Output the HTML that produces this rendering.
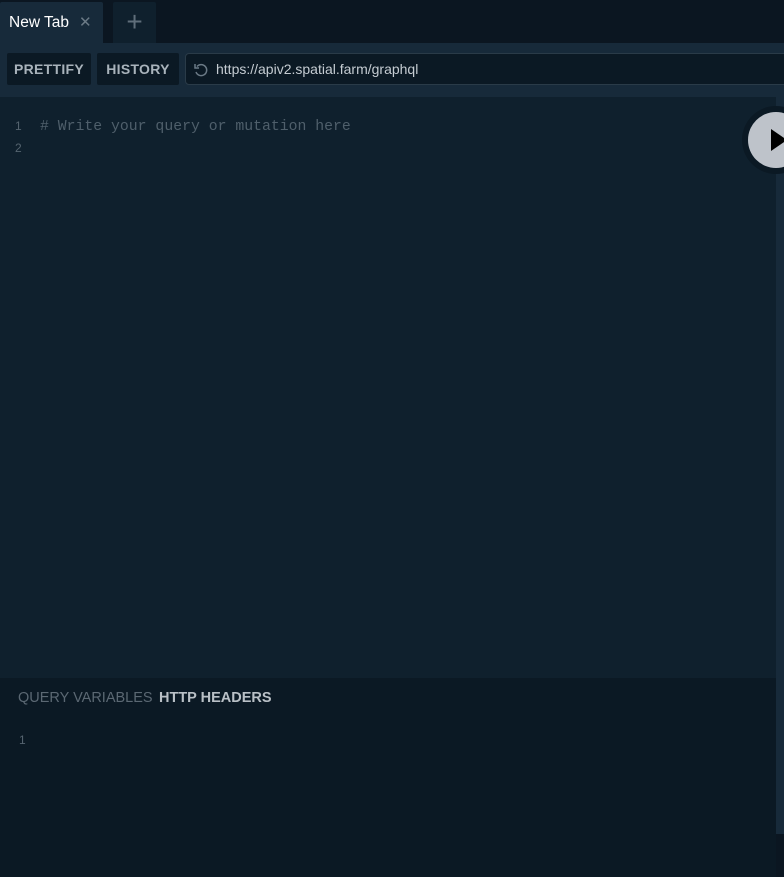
<!DOCTYPE html>
<html><head><meta charset="utf-8">
<style>
*{margin:0;padding:0;box-sizing:border-box}
html,body{width:784px;height:877px;overflow:hidden;background:#0b1621;font-family:"Liberation Sans",sans-serif}
.abs{position:absolute}
.tab{left:0;top:2px;width:103px;height:41px;background:#172a3a;color:#fff;font-size:15.5px;padding:11px 0 0 9px;border-radius:2px 2px 0 0}
.tab span{color:#6b7a86;margin-left:10px;font-size:15px}
.plus{left:113px;top:2px;width:43px;height:41px;background:#0f202d;border-radius:2px 2px 0 0;color:#5f6e7a;font-size:28px;text-align:center;line-height:40px}
.toolbar{left:0;top:43px;width:784px;height:54px;background:#172a3a}
.btn{top:53px;height:32px;background:#0b1924;color:#a9b3bb;font-weight:bold;font-size:14px;letter-spacing:.3px;line-height:32px;text-align:center;border-radius:2px}
.url{left:185px;top:53px;width:610px;height:32px;background:#0b1924;border:1px solid #2a3b48;border-radius:4px;color:#c5ccd2;font-size:14px;line-height:30px;padding-left:30px}
.editor{left:0;top:97px;width:776px;height:581px;background:#0f202d}
.strip{left:776px;top:97px;width:8px;height:737px;background:#172a3a}
.code{font-family:"Liberation Mono",monospace;font-size:14.8px;color:#4f5f6b}
.ln{color:#55646f;font-family:"Liberation Sans",sans-serif;font-size:12px}
.bottom{left:0;top:678px;width:776px;height:199px;background:#0b1924}
</style></head><body>
<div class="abs tab">New Tab<span>✕</span></div>
<div class="abs plus">+</div>
<div class="abs toolbar"></div>
<div class="abs btn" style="left:7px;width:84px">PRETTIFY</div>
<div class="abs btn" style="left:97px;width:82px">HISTORY</div>
<div class="abs url">https://apiv2.spatial.farm/graphql
<svg class="abs" style="left:7px;top:8px" width="16" height="16" viewBox="0 0 16 16"><path d="M4 4.5A5.5 5.5 0 1 1 3 10" fill="none" stroke="#6b7a86" stroke-width="1.5"/><path d="M2 2v4h4" fill="none" stroke="#6b7a86" stroke-width="1.5"/></svg></div>
<div class="abs editor"></div>
<div class="abs strip"></div>
<div class="abs ln" style="left:15px;top:119px">1</div>
<div class="abs ln" style="left:15px;top:141px">2</div>
<div class="abs code" style="left:40px;top:119px">#&nbsp;Write your query or mutation here</div>
<div class="abs" style="left:742px;top:106px;width:68px;height:68px;border-radius:50%;background:#0b1924"></div>
<div class="abs" style="left:748px;top:112px;width:56px;height:56px;border-radius:50%;background:#bec3ca"></div>
<div class="abs" style="left:771px;top:129px;width:0;height:0;border-top:11px solid transparent;border-bottom:11px solid transparent;border-left:16px solid #000"></div>
<div class="abs bottom"></div>
<div class="abs strip" style="top:678px;height:156px;background:#172a3a"></div>
<div class="abs" style="left:18px;top:690px;font-size:14.5px;color:#5b6873">QUERY VARIABLES</div>
<div class="abs" style="left:159px;top:690px;font-size:14.5px;color:#b9c0c6;font-weight:bold">HTTP HEADERS</div>
<div class="abs ln" style="left:19px;top:733px">1</div>
</body></html>
